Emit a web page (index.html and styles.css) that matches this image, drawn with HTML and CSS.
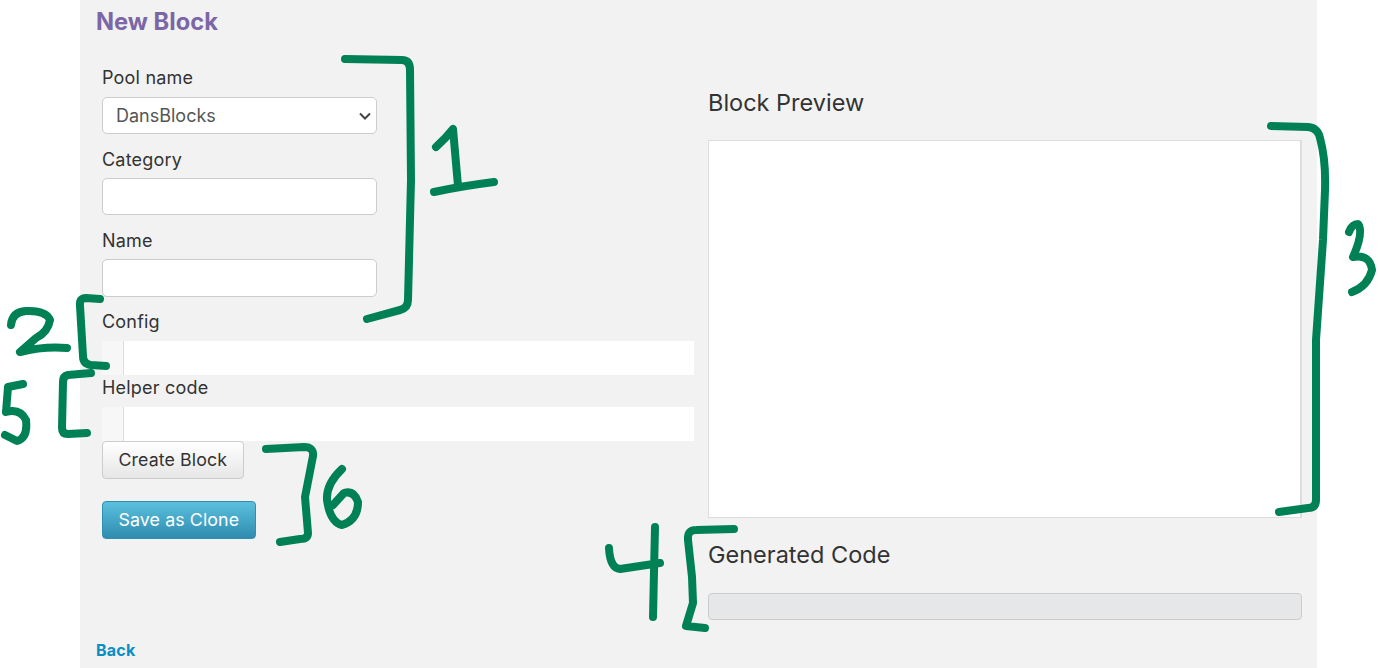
FILE: index.html
```html
<!DOCTYPE html>
<html lang="en">
<head>
<meta charset="utf-8">
<title>New Block</title>
<link rel="stylesheet" href="styles.css">
</head>
<body>
<main class="page">
  <h1 class="title">New Block</h1>
  <div class="columns">
    <form class="form">
      <label class="label loose">Pool name</label>
      <select class="field select"><option>DansBlocks</option></select>
      <label class="label">Category</label>
      <input class="field" type="text">
      <label class="label">Name</label>
      <input class="field tall" type="text">
      <label class="label loose">Config</label>
      <div class="editor"><div class="gutter"></div></div>
      <label class="label loose">Helper code</label>
      <div class="editor"><div class="gutter"></div></div>
      <div class="actions">
        <button class="btn" type="button">Create Block</button>
        <button class="btn primary" type="button">Save as Clone</button>
      </div>
    </form>
    <section class="side">
      <h2 class="heading">Block Preview</h2>
      <div class="preview"></div>
      <h2 class="heading code-heading">Generated Code</h2>
      <div class="code"></div>
    </section>
  </div>
  <a class="back" href="#">Back</a>
</main>
<svg class="ink" width="1378" height="668" viewBox="0 0 1378 668" fill="none" aria-hidden="true">
  <path d="M345 59 L402 60 Q410 60 410 70 L411 180 L408 300 Q408 308 400 310 L367 319"/>
  <path d="M436 147 Q446 138 453 129 L458 186 M434 192 Q462 186 494 182"/>
  <path d="M100 299 L86 298 Q79 298 80 306 L83 356 Q83 364 91 365 L106 366"/>
  <path d="M11 325 Q12 312 26 311 Q46 310 50 320 Q48 332 36 338 L20 352 Q44 346 67 348"/>
  <path d="M91 373 L68 375 Q63 376 63 382 L62 428 Q62 434 68 434 L87 433"/>
  <path d="M23 384 L8 387 L6 412 Q20 408 26 420 Q28 438 17 441 L5 435"/>
  <path d="M266 449 L304 447 Q314 447 313 456 L305 497 L308 533 Q308 539 300 539 L280 542"/>
  <path d="M342 469 Q326 484 327 500 Q330 522 342 525 Q358 520 358 502 Q354 490 344 493 L333 505"/>
  <path d="M1271 126 L1308 127 Q1318 128 1320 138 Q1326 160 1325 190 L1323 240 L1316 340 L1316 500 Q1316 508 1308 508 L1279 512"/>
  <path d="M1349 232 Q1352 224 1358 224 Q1364 232 1353 257 Q1370 254 1372 270 Q1368 286 1352 292"/>
  <path d="M734 529 L696 530 Q687 530 688 540 L692 577 L693 603 L686 626 L705 628"/>
  <path d="M655 527 L653 617 M609 548 Q610 568 620 569 L660 563"/>
</svg>
</body>
</html>
```
FILE: styles.css
```css
* { box-sizing: border-box; }
html, body { margin: 0; height: 100%; overflow: hidden; background: #fff; }
body { font-family: "Inter", "Open Sans", sans-serif; color: #333; position: relative; }
.page {
  width: 1237px;
  height: 668px;
  margin-left: 80px;
  padding: 0 15px 0 16px;
  background: #f2f2f2;
  display: flex;
  flex-direction: column;
}
.title {
  margin: 8px 0 0;
  font-size: 23.7px;
  line-height: 28px;
  font-weight: 700;
  color: #7b66a6;
}
.columns { display: flex; gap: 14px; padding-left: 6px; margin-top: 31px; flex: 1; }
.form { width: 592px; display: flex; flex-direction: column; align-items: flex-start; }
.label { font-size: 18px; letter-spacing: 0.2px; line-height: 22px; height: 22px; margin-bottom: 7px; color: #333; }
.label.loose { margin-bottom: 8px; }
.field {
  display: block;
  width: 275px;
  height: 37px;
  margin-bottom: 15px;
  border: 1px solid #ccc;
  border-radius: 5px;
  background: #fff;
  font: inherit;
  font-size: 18px;
  color: #555;
  padding: 0 13px;
}
.field.tall { height: 38px; margin-bottom: 14px; }
.select {
  appearance: none;
  background: #fff url("data:image/svg+xml,%3Csvg xmlns='http://www.w3.org/2000/svg' width='12' height='8' viewBox='0 0 12 8'%3E%3Cpath d='M1 1.5l5 5 5-5' fill='none' stroke='%23444' stroke-width='2'/%3E%3C/svg%3E") no-repeat right 5px center;
}
.editor { width: 100%; height: 34px; background: #fff; display: flex; margin-bottom: 2px; }
.gutter { width: 22px; background: #f7f7f7; border-right: 1px solid #ddd; }
.actions { display: flex; flex-direction: column; align-items: flex-start; gap: 22px; margin-top: -2px; }
.btn {
  height: 38px;
  padding: 0 15.5px 2px;
  font: inherit;
  font-size: 17.8px;
  letter-spacing: 0.1px;
  color: #333;
  border: 1px solid #ccc;
  border-radius: 4px;
  background: linear-gradient(#fff, #e6e6e6);
}
.btn.primary {
  color: #fff;
  border-color: #2f8fb0;
  background: linear-gradient(#5bc0de, #2f8cb0);
}
.side { width: 594px; display: flex; flex-direction: column; }
.heading { margin: 0; font-size: 23.5px; line-height: 28px; font-weight: 400; color: #333; }
.side > .heading:first-child { margin-top: 22px; }
.preview { height: 378px; margin-top: 23px; background: #fff; border: 1px solid #ddd; border-right: 2px solid #ddd; }
.code-heading { margin-top: 23px; }
.code { height: 27px; margin-top: 24px; background: #e6e7e9; border: 1px solid #ccc; border-radius: 4px; }
.back { font-size: 16px; letter-spacing: 0.2px; line-height: 20px; font-weight: 700; color: #0a8fc4; text-decoration: none; margin-bottom: 8px; }
.ink { position: absolute; left: 0; top: 0; }
.ink path { stroke: #008055; stroke-width: 8; stroke-linecap: round; stroke-linejoin: round; }
```
